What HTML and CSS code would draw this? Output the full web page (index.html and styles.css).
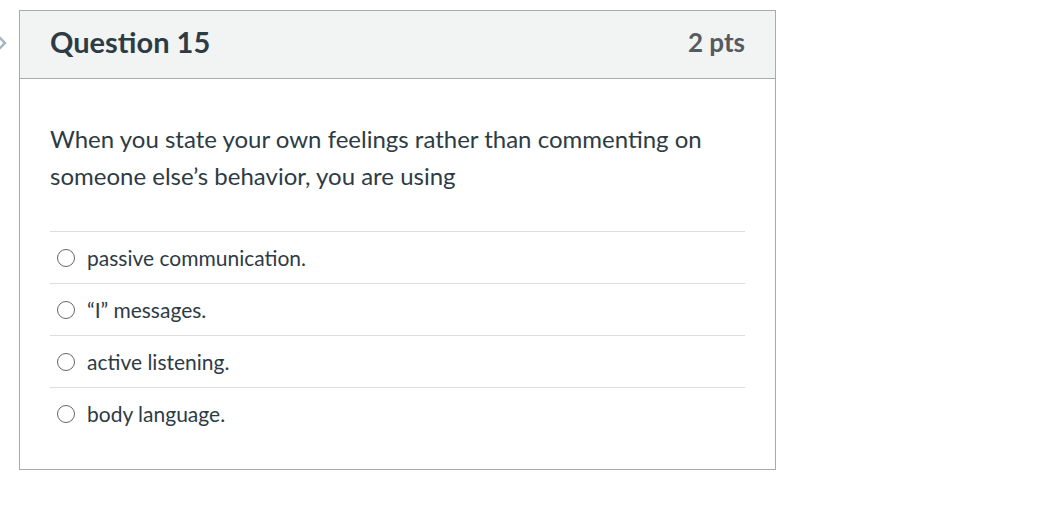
FILE: index.html
```html
<!DOCTYPE html>
<html>
<head>
<meta charset="utf-8">
<link rel="stylesheet" href="styles.css">
</head>
<body>
<div class="page">
  <svg class="chev" width="8" height="20" viewBox="0 0 8 20"><path d="M-2 3 L5 10 L-2 17" fill="none" stroke="#a9b6c2" stroke-width="2.5"/></svg>
  <div class="card">
    <div class="header">
      <span class="title">Question 15</span>
      <span class="pts">2 pts</span>
    </div>
    <div class="content">
      <p class="question">When you state your own feelings rather than commenting on someone else’s behavior, you are using</p>
      <div class="answers">
        <label class="answer"><span class="radio"></span><span>passive communication.</span></label>
        <label class="answer"><span class="radio"></span><span>“I” messages.</span></label>
        <label class="answer"><span class="radio"></span><span>active listening.</span></label>
        <label class="answer"><span class="radio"></span><span>body language.</span></label>
      </div>
    </div>
  </div>
</div>
</body>
</html>
```
FILE: styles.css
```css
html, body { margin: 0; padding: 0; background: #fff; }
body { font-family: Lato, "Noto Sans", sans-serif; color: #2d3b45; }
.page { position: relative; padding: 10px 0 0 19px; }
.chev { position: absolute; left: 0; top: 33px; }
.card { width: 755px; border: 1px solid #aaaaaa; box-sizing: content-box; }
.header {
  height: 68px; background: #f2f3f3; border-bottom: 1px solid #aaaaaa;
  display: flex; align-items: center; justify-content: space-between;
  padding: 0 30px 6px 30px; box-sizing: border-box;
}
.title { font-size: 29px; font-weight: 700; color: #2d3b45; }
.pts { font-size: 26px; font-weight: 700; color: #555b5f; }
.content { padding: 41px 30px 30px 30px; }
.question { margin: 0 0 37px 0; font-size: 24px; line-height: 37px; padding-right: 30px; }
.answers { border-top: 1px solid #dddddd; }
.answer {
  display: flex; align-items: center; height: 51px; border-bottom: 1px solid #dddddd;
  font-size: 21px; padding-left: 7px;
}
.answer:last-child { border-bottom: none; }
.radio {
  width: 16px; height: 16px; border: 1.5px solid #666; border-radius: 50%;
  margin-right: 12px; flex: none;
}
```
